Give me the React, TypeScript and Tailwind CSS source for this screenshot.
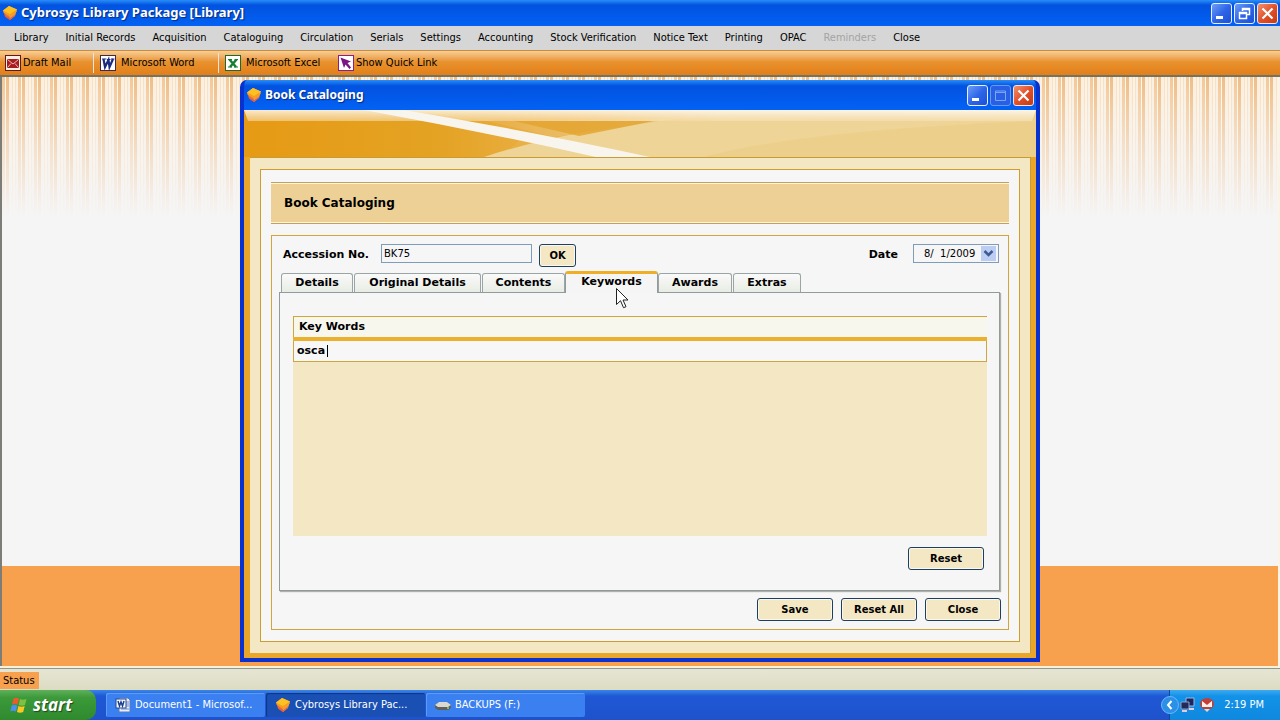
import { ReactNode } from "react";
import clsx from "clsx";

const menuItems = [
  "Library",
  "Initial Records",
  "Acquisition",
  "Cataloguing",
  "Circulation",
  "Serials",
  "Settings",
  "Accounting",
  "Stock Verification",
  "Notice Text",
  "Printing",
  "OPAC",
  "Reminders",
  "Close",
];

const tabs = [
  { label: "Details", width: "w-[72px]" },
  { label: "Original Details", width: "w-[127px]" },
  { label: "Contents", width: "w-[83px]" },
  { label: "Keywords", width: "w-[93px]" },
  { label: "Awards", width: "w-[74px]" },
  { label: "Extras", width: "w-[68px]" },
];

function BookIcon() {
  return (
    <svg viewBox="0 0 16 16" className="w-4 h-4 shrink-0" aria-hidden="true">
      <path d="M1.500 6 7 10.500 8 15 3 11.500Z" fill="#f2703a" />
      <path d="M7 10.500 14.500 6 13 11 8 15Z" fill="#f59a3c" />
      <path d="M3 10 8 13.500 13 9.500 12.500 11 8 15 3 11.500Z" fill="#e85a3a" />
      <path d="M1 5.500 7 1 15 4.500 14.500 7 7.500 11.500 1.500 7.500Z" fill="#f79f1c" />
      <path d="M1 5.500 7 1 15 4.500 8 9Z" fill="#ffc021" />
    </svg>
  );
}

function MailIcon() {
  return (
    <svg viewBox="0 0 16 16" className="w-4 h-4" aria-hidden="true">
      <rect x=".5" y=".5" width="15" height="15" fill="#fbeee4" stroke="#5c1c1c" />
      <rect x="2" y="4" width="12" height="9" fill="#a51c22" />
      <path d="M2.500 4.500 8 9l5.500-4.500M2.500 12.500 6 8.500M13.500 12.500 10 8.500" stroke="#f0b8b0" fill="none" />
    </svg>
  );
}

function WordIcon() {
  return (
    <svg viewBox="0 0 16 16" className="w-4 h-4" aria-hidden="true">
      <rect x=".5" y=".5" width="15" height="15" fill="#fff" stroke="#3b2a50" />
      <path d="M3.500 4 5 12 8.500 5 9.500 12 13 4" stroke="#1c2a80" strokeWidth="2.200" fill="none" />
      <path d="M2 4h4.500M7 4.500h3.500M11 4h3.500" stroke="#1c2a80" fill="none" />
    </svg>
  );
}

function ExcelIcon() {
  return (
    <svg viewBox="0 0 16 16" className="w-4 h-4" aria-hidden="true">
      <rect x=".5" y=".5" width="15" height="15" fill="#fff" stroke="#1e6a2c" />
      <path d="M4.500 4.500 11 12M11.500 4.500 5 12" stroke="#17802f" strokeWidth="2.500" fill="none" />
      <path d="M3 4.500h4M9.500 4.500H13M3 12h4M9 12h4" stroke="#17802f" fill="none" />
    </svg>
  );
}

function LinkIcon() {
  return (
    <svg viewBox="0 0 16 16" className="w-4 h-4" aria-hidden="true">
      <rect x=".5" y=".5" width="15" height="15" fill="#fff" stroke="#8a1f8c" />
      <path d="M2.500 2.500 13 6.500 9.500 8 13 12.500 11.500 14 7.500 9.500 6 13Z" fill="#7b1484" />
    </svg>
  );
}

function WordDocIcon() {
  return (
    <svg viewBox="0 0 16 16" className="w-4 h-4 shrink-0" aria-hidden="true">
      <path d="M4 1h9l2 2v12H4Z" fill="#e6eefc" stroke="#5b7ab8" />
      <path d="M11 5h3M11 7h3M11 9h3M6 12h8" stroke="#6c8cc8" />
      <rect x="1" y="2" width="10" height="9" fill="#f4f8ff" stroke="#274a92" />
      <path d="M3 4 4.500 9 6 5 7.500 9 9 4" stroke="#1d3f8c" strokeWidth="1.500" fill="none" />
    </svg>
  );
}

function DriveIcon() {
  return (
    <svg viewBox="0 0 16 16" className="w-4 h-4 shrink-0" aria-hidden="true">
      <path d="M0 8 4 5h8l4 3v3l-3 2H3L0 11Z" fill="#5f5f5c" />
      <path d="M0 8 4 5h8l4 3-3 2H3Z" fill="#d9d9d2" />
      <circle cx="13" cy="11" r="1" fill="#7be05a" />
    </svg>
  );
}

function WindowsFlag() {
  return (
    <svg viewBox="0 0 18 18" className="w-[18px] h-[18px]" aria-hidden="true">
      <path d="M3.500 2.500Q6 1 9 2.500L7.500 8.500Q4.500 7.200 2 8.500Z" fill="#ee5a2c" />
      <path d="M10 3Q13 4.500 16.500 3L15 9Q11.500 10.500 8.700 9Z" fill="#7cc142" />
      <path d="M1.800 9.500Q4.500 8.200 7.300 9.500L6 15.500Q3 14 .3 15.500Z" fill="#4b8ff0" />
      <path d="M8.400 10Q11.500 11.500 14.700 10L13.200 16Q10 17.500 7 16Z" fill="#fbc820" />
    </svg>
  );
}

type ControlKind = "minimize" | "maximize" | "restore" | "close";

function WindowControl({ kind, disabled }: { kind: ControlKind; disabled?: boolean }) {
  return (
    <button
      aria-label={kind}
      disabled={disabled}
      className={clsx(
        "w-[21px] h-[21px] rounded-[3px] border flex items-center justify-center",
        kind === "close" && "border-[#f4e4dc] bg-linear-to-br from-[#f0906c] via-[#e2502a] to-[#c43a14]",
        kind !== "close" && !disabled && "border-[#e8f0ff] bg-linear-to-br from-[#6f9cf8] via-[#2f66e8] to-[#1a50d8]",
        disabled && "border-[#6d98f2] bg-[#2760e4]"
      )}
    >
      <svg viewBox="0 0 19 19" className="w-[19px] h-[19px]" fill="none" stroke="#fff">
        {kind === "minimize" && <path d="M4 13.500h7" strokeWidth="3" />}
        {kind === "maximize" && <path d="M4.500 5h10v9.500h-10ZM4.500 6.500h10" stroke="#7ba4f8" />}
        {kind === "restore" && (
          <path d="M7.500 7V4.500h7v6H12M7.500 5.500h7M4.500 8.500h7v6h-7ZM4.500 9.500h7" strokeWidth="1.500" />
        )}
        {kind === "close" && <path d="m4.500 4.500 10 10M14.500 4.500l-10 10" strokeWidth="2.200" />}
      </svg>
    </button>
  );
}

function ToolbarButton({ icon, label, className }: { icon: ReactNode; label: string; className: string }) {
  return (
    <button className={clsx("flex items-center h-5 whitespace-nowrap", className)}>
      {icon}
      {label}
    </button>
  );
}

function FormButton({ children, className }: { children: ReactNode; className: string }) {
  return (
    <button
      className={clsx(
        "h-[23px] rounded-[3px] border border-[#1d3f63] bg-[#f4e8c4] font-bold text-[10px] shadow-[inset_0_0_0_1px_#fbf8ea]",
        className
      )}
    >
      {children}
    </button>
  );
}

function TaskButton({ icon, label, active }: { icon: ReactNode; label: string; active?: boolean }) {
  return (
    <button
      className={clsx(
        "flex items-center gap-1 w-[159px] h-6 pl-[9px] rounded-[2px] text-white text-[11px] text-left whitespace-nowrap",
        active
          ? "bg-[#1a4fb4] shadow-[inset_1px_1px_1px_#0f3687]"
          : "bg-[#3a80f0] shadow-[inset_1px_1px_0_#5c9bf8]"
      )}
    >
      {icon}
      {label}
    </button>
  );
}

function Banner() {
  return (
    <svg viewBox="0 0 792 47" preserveAspectRatio="none" className="block w-full h-[47px]" aria-hidden="true">
      <defs>
        <linearGradient id="base">
          <stop offset="0" stopColor="#e69a14" />
          <stop offset=".25" stopColor="#e4a324" />
          <stop offset=".42" stopColor="#edb450" />
          <stop offset=".6" stopColor="#ecce8c" />
          <stop offset="1" stopColor="#ecd090" />
        </linearGradient>
        <linearGradient id="gloss" x2="0" y2="1">
          <stop offset="0" stopColor="#fff" stopOpacity=".8" />
          <stop offset="1" stopColor="#fbe8c4" stopOpacity=".5" />
        </linearGradient>
        <linearGradient id="swoosh">
          <stop offset="0" stopColor="#e8a83a" />
          <stop offset="1" stopColor="#eccf8c" />
        </linearGradient>
      </defs>
      <path d="M0 0h792v47H0Z" fill="url(#base)" />
      <path d="M180 0 400 47H240Q330 25 180 0Z" fill="#eab44c" opacity=".5" />
      <path d="M240 47Q310 24 410 11H792V47Z" fill="#eed496" />
      <path d="M210 3 310 27 430 9 250 11Z" fill="url(#swoosh)" />
      <path d="M270 11h140l-75 15Z" fill="#e3a22c" opacity=".8" />
      <path d="M460 47Q560 20 792 11V47Z" fill="#ebcd86" opacity=".7" />
      <path d="M0 0h792l-4 11H4Z" fill="url(#gloss)" />
      <path d="M120 0h40Q290 22 406 47H352Q240 22 120 0Z" fill="#f8f5ee" />
    </svg>
  );
}

function Tab({ label, width, active }: { label: string; width: string; active: boolean }) {
  return (
    <button
      role="tab"
      aria-selected={active}
      className={clsx(
        "relative rounded-t-[3px] border border-b-0 font-bold text-[11px] whitespace-nowrap",
        width,
        active
          ? "h-[22px] pb-[2px] -mb-px bg-[#f5f5f5] border-[#919b9c] border-t-[3px] border-t-[#efae28]"
          : "h-[19px] bg-linear-to-b from-[#fafafa] to-[#e9ece4] border-[#9aa6a6]",
        !active && label !== "Contents" && "mr-px"
      )}
    >
      {label}
      {active && (
        <svg viewBox="0 0 12 21" className="absolute left-[50px] top-[14px] w-3 h-[21px]" aria-hidden="true">
          <path d="M.5.500v16l4-3.800 3 7 2.500-1-3-6.700h5Z" fill="#fff" stroke="#222" />
        </svg>
      )}
    </button>
  );
}

function CatalogWindow() {
  return (
    <section
      aria-label="Book Cataloging"
      className="w-full max-w-[800px] flex flex-col rounded-t-[7px] overflow-hidden border-x-4 border-b-4 border-[#0831d0] bg-[#0831d0]"
    >
      <header className="flex items-center h-[30px] px-[2px] bg-linear-to-b from-[#2a8cf8] via-[#0352e0] via-20% to-[#0262f4]">
        <BookIcon />
        <h1 className="flex-1 pl-[3px] font-['Noto_Sans'] font-bold text-[12px] text-white [text-shadow:1px_1px_1px_#0a2a80]">
          Book Cataloging
        </h1>
        <div className="flex gap-[2px]">
          <WindowControl kind="minimize" />
          <WindowControl kind="maximize" disabled />
          <WindowControl kind="close" />
        </div>
      </header>
      <Banner />
      <div className="bg-[#e9a629] pl-[6px] pr-[5px] pb-[5px]">
        <div className="bg-[#f4e7c4] border-t border-r border-[#c99b34] pt-[11px] px-[10px] pb-[11px]">
          <div className="bg-[#f6f6f6] border border-[#cf9d2c] px-[10px] pt-3 pb-[11px]">
            <div className="border-y border-[#cfa040] py-px">
              <h2 className="bg-[#ecd096] h-[38px] pl-[13px] flex items-center font-bold text-[12px]">Book Cataloging</h2>
            </div>
            <form
              className="mt-[11px] border border-[#d2a53c] pt-2 px-[7px] pb-2"
              onSubmit={(e) => e.preventDefault()}
            >
              <div className="flex items-start pl-[4px] pr-[2px]">
                <label htmlFor="accession" className="w-[98px] leading-[22px] font-bold text-[11px] whitespace-nowrap">
                  Accession No.
                </label>
                <input
                  id="accession"
                  defaultValue="BK75"
                  className="w-[151px] h-[19px] px-[2px] border border-[#7f9db9] bg-transparent text-[10px]"
                />
                <FormButton className="ml-[7px] w-[37px]">OK</FormButton>
                <label htmlFor="date" className="ml-auto mr-[15px] leading-[22px] font-bold text-[11px]">
                  Date
                </label>
                <div className="flex items-center w-[86px] h-[19px] border border-[#7f9db9] pr-[2px]">
                  <select
                    id="date"
                    className="appearance-none flex-1 min-w-0 h-full pl-[10px] text-[10px] whitespace-pre overflow-hidden"
                  >
                    <option>8/&nbsp; 1/2009</option>
                  </select>
                  <svg viewBox="0 0 15 15" className="w-[15px] h-[15px] bg-[#bccdf4]" aria-hidden="true">
                    <path d="m3.500 5 4 4 4-4" fill="none" stroke="#3f5a90" strokeWidth="2.500" />
                  </svg>
                </div>
              </div>

              <div role="tablist" className="flex items-end h-[22px] mt-[3px] pl-[2px]">
                {tabs.map((tab) => (
                  <Tab key={tab.label} label={tab.label} width={tab.width} active={tab.label === "Keywords"} />
                ))}
              </div>

              <div
                role="tabpanel"
                className="mr-px border border-[#919b9c] shadow-[1px_1px_1px_#b0b0a8] h-[299px] pt-[23px] pl-[13px] pr-3"
              >
                <div className="h-[220px] bg-[#f4e8c4]">
                  <table className="w-full border-collapse">
                    <thead>
                      <tr>
                        <th className="h-[22px] pl-[5px] text-left text-[11px] bg-[#f7f7ee] border-t border-l border-[#cfa63c] border-b-4 border-b-[#ebb02c]">
                          Key Words
                        </th>
                      </tr>
                    </thead>
                    <tbody>
                      <tr>
                        <td className="p-0 h-[22px] bg-[#f7f7f7] border border-[#cfa63c] border-t-0">
                          <div className="flex items-center pl-[3px]">
                            <input
                              aria-label="Key word"
                              defaultValue="osca"
                              className="w-[30px] h-[20px] font-bold text-[11px]"
                            />
                            <span className="w-px h-3 bg-black" />
                          </div>
                        </td>
                      </tr>
                    </tbody>
                  </table>
                </div>
                <div className="flex justify-end pt-[11px] pr-[3px]">
                  <FormButton className="w-[76px]">Reset</FormButton>
                </div>
              </div>

              <div className="flex justify-end gap-2 mt-[7px]">
                <FormButton className="w-[76px]">Save</FormButton>
                <FormButton className="w-[76px]">Reset All</FormButton>
                <FormButton className="w-[76px]">Close</FormButton>
              </div>
            </form>
          </div>
        </div>
      </div>
    </section>
  );
}

export default function App() {
  return (
    <div className="min-h-screen flex flex-col bg-[#f5f5f5] text-black font-['DejaVu_Sans',sans-serif]">
      <header className="flex items-center h-[26px] px-[2px] bg-linear-to-b from-[#2a8cf8] via-[#0352e0] via-20% to-[#0262f4]">
        <BookIcon />
        <p className="flex-1 pl-[3px] font-['Noto_Sans'] font-bold text-[13px] text-white [text-shadow:1px_1px_1px_#0a2a80]">
          Cybrosys Library Package [Library]
        </p>
        <div className="flex gap-[2px]">
          <WindowControl kind="minimize" />
          <WindowControl kind="restore" />
          <WindowControl kind="close" />
        </div>
      </header>

      <nav className="flex items-center gap-[17px] h-6 pl-[14px] bg-[#d6d6d6] font-['DejaVu_Sans_Condensed'] text-[11px]">
        {menuItems.map((item) => (
          <button key={item} disabled={item === "Reminders"} className="whitespace-nowrap disabled:text-[#a4a4a4]">
            {item}
          </button>
        ))}
      </nav>

      <div className="flex items-center h-[27px] pl-[5px] border-t border-[#c98c3c] border-b-2 border-b-[#6f7468] bg-linear-to-b from-[#f8cf94] via-[#e8922e] via-45% to-[#e27f18] font-['DejaVu_Sans_Condensed'] text-[11px]">
        <ToolbarButton icon={<MailIcon />} label="Draft Mail" className="w-[88px] gap-[2px]" />
        <ToolbarButton icon={<WordIcon />} label="Microsoft Word" className="w-[125px] gap-[5px] pl-[6px] border-l border-[#e8e4ec]" />
        <ToolbarButton icon={<ExcelIcon />} label="Microsoft Excel" className="w-[120px] gap-[5px] pl-[6px] border-l border-[#e8e4ec]" />
        <ToolbarButton icon={<LinkIcon />} label="Show Quick Link" className="gap-[2px]" />
      </div>

      {/* MDI workspace */}
      <main className="flex-1 grid border-x-2 border-l-[#7d7d78] border-r-[#fbf3e4]">
        <div className="col-start-1 row-start-1 flex flex-col" aria-hidden="true">
          <div className="h-[140px] bg-[repeating-linear-gradient(90deg,#f5c898_0_3px,#fdf8ee_3px_4px,#f1bd86_4px_7px,#fbf0e0_7px_10px,#f8dfc2_10px_11px,#fcf3e6_11px_13px,#f8dfc2_13px_14px,#fbf0e0_14px_16px)]">
            <div className="h-full bg-linear-to-b from-transparent via-[#f5f5f5]/50 via-45% to-[#f5f5f5]" />
          </div>
          <div className="flex-1" />
          <div className="h-[100px] bg-[#f7a04e]" />
        </div>
        <div className="col-start-1 row-start-1 flex justify-center items-start pt-[3px] pb-1">
          <CatalogWindow />
        </div>
      </main>

      <footer className="flex items-center h-6 border-t-2 border-[#fbf0d8] shadow-[inset_0_1px_0_#8e9690] bg-linear-to-b from-[#e6e6d4] to-[#dcdcc4] font-['DejaVu_Sans_Condensed'] text-[11px]">
        <span className="mt-[3px] bg-[#f7a04e] h-[17px] leading-[17px] pl-[3px] pr-1">Status</span>
      </footer>

      <div className="flex items-center h-[30px] bg-linear-to-b from-[#3a86e8] via-[#1f58d4] via-20% to-[#1e52cc] font-['DejaVu_Sans_Condensed']">
        <button className="flex items-center gap-[5px] w-24 h-full pl-[10px] rounded-r-[10px] bg-linear-to-b from-[#5fb05c] via-[#3c9a3a] via-25% to-[#2f8a2e] text-white font-['Open_Sans'] font-bold italic text-[17px] [text-shadow:1px_1px_1px_#1c4a1c]">
          <WindowsFlag />
          start
        </button>
        <div className="flex flex-1 gap-px pl-[10px]">
          <TaskButton icon={<WordDocIcon />} label="Document1 - Microsof..." />
          <TaskButton icon={<BookIcon />} label="Cybrosys Library Pac..." active />
          <TaskButton icon={<DriveIcon />} label="BACKUPS (F:)" />
        </div>
        <div className="flex items-center h-full bg-linear-to-b from-[#3aaaf0] via-[#1292e8] via-20% to-[#1088e0] pr-4 text-white text-[11px] border-l border-[#0f4a98]">
          <button aria-label="Show hidden icons" className="-ml-[9px]">
            <svg viewBox="0 0 18 18" className="w-[18px] h-[18px]">
              <circle cx="9" cy="9" r="8.500" fill="#2c8fe8" stroke="#6ab8f6" />
              <path d="M10.500 5 7 9l3.500 4" fill="none" stroke="#fff" strokeWidth="2" />
            </svg>
          </button>
          <svg viewBox="0 0 36 16" className="w-9 h-4 ml-px mr-2" aria-hidden="true">
            <path d="M6 1h8v8H6Z" fill="#1a2660" stroke="#a4b4d8" />
            <path d="M1 5h8v7H1Z" fill="#232a58" stroke="#8fa2cc" />
            <path d="M2 13h5v2H2ZM9 11h5v2H9Z" fill="#e4c8dc" />
            <ellipse cx="27" cy="7" rx="7" ry="6" fill="#b8443c" />
            <path d="M22 3 27 7l5-4v7H22Z" fill="#f8f0ee" />
            <path d="m22 3 5 4 5-4" fill="none" stroke="#d8342c" strokeWidth="1.500" />
            <path d="M24 12h6l-3 3Z" fill="#dcdcdc" />
          </svg>
          <time className="whitespace-nowrap">2:19 PM</time>
        </div>
      </div>
    </div>
  );
}
